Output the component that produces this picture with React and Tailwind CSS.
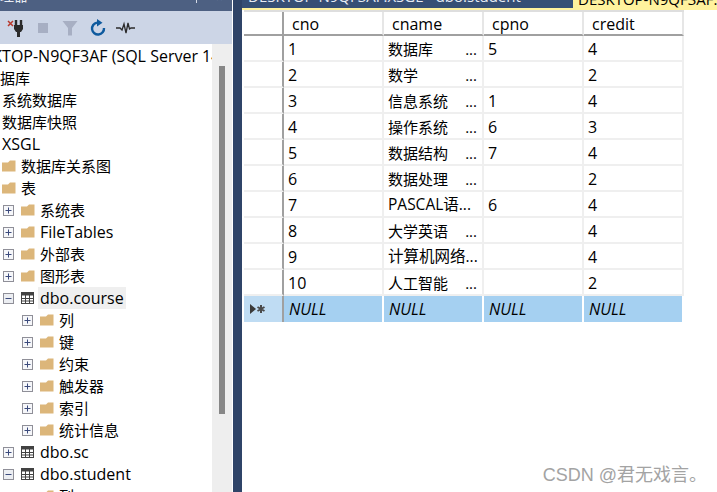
import React from 'react'

const FONT = "font-['Open_Sans','Noto_Sans_CJK_SC',sans-serif]"

function Folder() {
  return (
    <svg width="14" height="12" viewBox="0 0 14 12" className="shrink-0">
      <path d="M0 2.5 L6 2.5 L8 0.5 L13.5 0.5 L13.5 11.5 L0 11.5 Z" fill="#dcb67a" />
    </svg>
  )
}

function TableIcon() {
  return (
    <svg width="13" height="12" viewBox="0 0 13 12" className="shrink-0">
      <rect x="0.5" y="0.5" width="12" height="11" fill="#fff" stroke="#424242" />
      <rect x="0.5" y="0.5" width="12" height="3" fill="#424242" />
      <path d="M4.5 1V12M8.5 1V12M1 6.5H12M1 9H12" stroke="#424242" strokeWidth="1" />
    </svg>
  )
}

function Expander({ open }) {
  return (
    <svg width="11" height="11" viewBox="0 0 11 11" className="shrink-0">
      <rect x="0.5" y="0.5" width="10" height="10" fill={open ? '#eceef2' : '#f6f7fa'} stroke="#8f8f98" />
      <path d="M2.5 5.5H8.5" stroke="#3b4a7c" />
      {!open && <path d="M5.5 2.5V8.5" stroke="#3b4a7c" />}
    </svg>
  )
}

function TreeRow({ level = 0, expander, icon, latin, children, active }) {
  return (
    <div className={`flex h-[22px] shrink-0 items-center whitespace-nowrap ${latin ? 'text-[16px]' : 'text-[15px]'}`}>
      <div className={level === 1 ? 'w-[3px] shrink-0' : 'w-[22px] shrink-0'} />
      <div className="flex w-[18px] shrink-0 items-center">
        {expander === 'plus' && <Expander />}
        {expander === 'minus' && <Expander open />}
      </div>
      {icon === 'folder' && <div className="mr-[5px] shrink-0"><Folder /></div>}
      {icon === 'table' && <div className="mr-[6px] shrink-0"><TableIcon /></div>}
      <span className={active ? 'ml-[-2px] flex h-[22px] items-center bg-[#efefef] px-[2px]' : ''}>{children}</span>
    </div>
  )
}

function ObjectTree() {
  const top = 'flex h-[22px] shrink-0 items-center whitespace-nowrap'
  return (
    <div className="flex min-w-0 flex-1 flex-col overflow-hidden pt-[1px] text-[15px] text-black">
      <div className={`${top} ml-[-37px] text-[16px]`}>DESKTOP-N9QF3AF (SQL Server 14.0.1000)</div>
      <div className={`${top} ml-[-15px]`}>数据库</div>
      <div className={`${top} ml-[2px]`}>系统数据库</div>
      <div className={`${top} ml-[2px]`}>数据库快照</div>
      <div className={`${top} ml-[2px] text-[16px]`}>XSGL</div>
      <div className={`${top} ml-[2px]`}><div className="mr-[5px]"><Folder /></div>数据库关系图</div>
      <div className={`${top} ml-[2px]`}><div className="mr-[5px]"><Folder /></div>表</div>
      <TreeRow level={1} expander="plus" icon="folder">系统表</TreeRow>
      <TreeRow level={1} expander="plus" icon="folder" latin>FileTables</TreeRow>
      <TreeRow level={1} expander="plus" icon="folder">外部表</TreeRow>
      <TreeRow level={1} expander="plus" icon="folder">图形表</TreeRow>
      <TreeRow level={1} expander="minus" icon="table" latin active>dbo.course</TreeRow>
      <TreeRow level={2} expander="plus" icon="folder">列</TreeRow>
      <TreeRow level={2} expander="plus" icon="folder">键</TreeRow>
      <TreeRow level={2} expander="plus" icon="folder">约束</TreeRow>
      <TreeRow level={2} expander="plus" icon="folder">触发器</TreeRow>
      <TreeRow level={2} expander="plus" icon="folder">索引</TreeRow>
      <TreeRow level={2} expander="plus" icon="folder">统计信息</TreeRow>
      <TreeRow level={1} expander="plus" icon="table" latin>dbo.sc</TreeRow>
      <TreeRow level={1} expander="minus" icon="table" latin>dbo.student</TreeRow>
      <TreeRow level={2} icon="folder">列</TreeRow>
    </div>
  )
}

function Toolbar() {
  return (
    <div className="flex h-[33px] shrink-0 items-center bg-[#ccd5e6] pl-[7px]">
      <svg width="20" height="20" viewBox="0 0 20 20" className="shrink-0">
        <path d="M1 3L6 8M6 3L1 8" stroke="#b8392c" strokeWidth="1.5" />
        <path d="M9 2V7M14 2V7" stroke="#2b2b2b" strokeWidth="2.4" />
        <path d="M7 7H16V11L14 14H13V19H10V14H9L7 11Z" fill="#2b2b2b" />
      </svg>
      <div className="ml-[11px] h-[10px] w-[10px] shrink-0 bg-[#a7afc3]" />
      <svg width="16" height="16" viewBox="0 0 16 16" className="ml-[14px] shrink-0">
        <path d="M0.5 1H15.5L10 8V15.5H6V8Z" fill="#a7afc3" />
      </svg>
      <svg width="18" height="18" viewBox="0 0 18 18" className="ml-[11px] shrink-0">
        <path d="M8 3.6A6 6 0 1 0 15 9" fill="none" stroke="#0e5a9e" strokeWidth="2.4" />
        <path d="M8 0L13.5 3.8L8 7.6Z" fill="#0e5a9e" />
      </svg>
      <svg width="19" height="14" viewBox="0 0 19 14" className="ml-[9px] shrink-0">
        <path d="M0 7H4L6 9L8 3L10 12L12 2L13.500 8L15 7H19" fill="none" stroke="#2b2b2b" strokeWidth="1.3" />
      </svg>
    </div>
  )
}

function LeftPanel() {
  return (
    <div className="flex h-full w-[232px] shrink-0 flex-col">
      <div className="relative h-[11px] shrink-0 overflow-hidden bg-[#4d6082]">
        <div className="mt-[-14px] ml-[-70px] whitespace-nowrap text-[14px] leading-[20px] text-[#e8ecf4]">对象资源管理器</div>
        <div className="absolute left-[196px] top-0 h-[3px] w-[1px] bg-[#d5dbe8]" />
        <div className="absolute left-[216px] top-0 mt-[-8px] text-[12px] leading-none text-[#d5dbe8]">×</div>
      </div>
      <Toolbar />
      <div className="flex min-h-0 flex-1 bg-white">
        <ObjectTree />
        <div className="w-[20px] shrink-0 bg-[#eeeeee] pl-[7px] pt-[22px]">
          <div className="h-[348px] w-[6px] bg-[#878787]" />
        </div>
      </div>
    </div>
  )
}

const rows = [
  ['1', '数据库', '5', '4', true],
  ['2', '数学', '', '2', true],
  ['3', '信息系统', '1', '4', true],
  ['4', '操作系统', '6', '3', true],
  ['5', '数据结构', '7', '4', true],
  ['6', '数据处理', '', '2', true],
  ['7', 'PASCAL语...', '6', '4', false],
  ['8', '大学英语', '', '4', true],
  ['9', '计算机网络...', '', '4', false],
  ['10', '人工智能', '', '2', true],
]

function Cell({ children, className = '' }) {
  return (
    <div className={`flex h-[26px] items-center overflow-hidden whitespace-nowrap border-r-2 border-b-2 border-[#efefef] pl-[4px] pt-[2px] ${className}`}>
      {children}
    </div>
  )
}

function ResultGrid() {
  return (
    <div className="ml-[2px] w-[440px] text-[16px] text-black">
      <div className="grid grid-cols-[40px_100px_100px_100px_100px] border-t-2 border-[#dedede]">
        <div className="h-[24px] border-r-2 border-b-2 border-r-[#a0a0a0] border-b-[#a0a0a0]" />
        {['cno', 'cname', 'cpno', 'credit'].map((h) => (
          <div key={h} className="flex h-[24px] items-center border-r-2 border-b-2 border-r-[#e6e6e6] border-b-[#a0a0a0] pl-[8px] pt-[2px]">{h}</div>
        ))}
        {rows.map(([cno, cname, cpno, credit, dots]) => (
          <React.Fragment key={cno}>
            <Cell className="border-r-[#a0a0a0]" />
            <Cell>{cno}</Cell>
            <Cell className={`justify-between pr-[5px] ${dots ? 'text-[15px]' : 'text-[15.5px]'}`}>
              <span>{cname}</span>
              {dots && <span>...</span>}
            </Cell>
            <Cell>{cpno}</Cell>
            <Cell>{credit}</Cell>
          </React.Fragment>
        ))}
        <div className="flex h-[26px] items-center border-r-2 border-r-[#a0a0a0] bg-[#bfdcf3] pl-[5px]">
          <svg width="17" height="12" viewBox="0 0 17 12">
            <path d="M1 1L7 6L1 11Z" fill="#3a3a3a" />
            <path d="M12 2V10M8.500 4L15.500 8M15.500 4L8.500 8" stroke="#4a4a4a" strokeWidth="2" />
          </svg>
        </div>
        {[0, 1, 2, 3].map((i) => (
          <div key={i} className="flex h-[26px] items-center border-r-2 border-white bg-[#a5d0f1] pl-[5px] italic">NULL</div>
        ))}
      </div>
    </div>
  )
}

function TabStrip() {
  return (
    <div className="flex h-[10px] shrink-0 overflow-hidden">
      <div className="w-[331px] shrink-0 overflow-hidden border-b-2 border-[#fff29d] bg-[#364f75] pl-[6px] text-[#e8ecf4]">
        <div className="mt-[-14px] whitespace-nowrap text-[15px] leading-[20px]">DESKTOP-N9QF3AF.XSGL - dbo.student</div>
      </div>
      <div className="flex-1 overflow-hidden bg-[#fff29d] pl-[5px] text-black">
        <div className="mt-[-11px] whitespace-nowrap text-[15px] leading-[20px]">DESKTOP-N9QF3AF.XSGL</div>
      </div>
    </div>
  )
}

export default function App() {
  return (
    <div className={`relative flex h-[492px] w-[717px] overflow-hidden bg-white ${FONT}`}>
      <LeftPanel />
      <div className="ml-[1px] w-[9px] shrink-0 bg-[#2f4468]" />
      <div className="flex min-w-0 flex-1 flex-col">
        <TabStrip />
        <ResultGrid />
      </div>
      <div className="absolute bottom-[6px] right-[10px] font-['Liberation_Sans','Noto_Sans_CJK_SC',sans-serif] text-[18px] leading-[22px] text-[#a3a3a3]">CSDN @君无戏言。</div>
    </div>
  )
}
